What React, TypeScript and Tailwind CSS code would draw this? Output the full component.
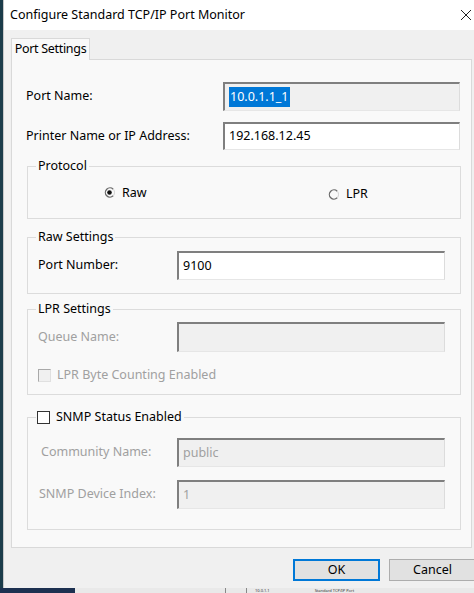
import React from 'react';

const FONT = { fontFamily: '"Noto Sans", "Open Sans", Arial, sans-serif' };

// ── Small win32-style controls ────────────────────────────────────────────
function TextBox({ value, disabled, selected, className }: { value?: string; disabled?: boolean; selected?: boolean; className: string }) {
  return (
    <div
      className={`flex items-center border-t-2 border-l-2 border-r border-b border-t-[#7f7f7f] border-l-[#7f7f7f] border-r-[#dcdcdc] border-b-[#e6e6e6] pl-[4px] ${
        disabled || selected ? 'bg-[#f0f0f0]' : 'bg-white'
      } ${className}`}
    >
      {selected ? (
        <span className="bg-[#0078d7] text-white px-[1px] leading-[20px]">{value}</span>
      ) : (
        <span className={disabled ? 'text-[#a0a0a0]' : 'text-black'}>{value}</span>
      )}
    </div>
  );
}

function Radio({ checked }: { checked?: boolean }) {
  return (
    <svg width="11" height="11" viewBox="0 0 11 11" className="shrink-0">
      <path d="M9.2 2.2 A4.6 4.6 0 1 0 9.2 8.8" fill="none" stroke="#6a6a6a" strokeWidth="1.3" />
      <path d="M9.2 2.2 A4.6 4.6 0 0 1 9.2 8.8" fill="none" stroke="#d8d8d8" strokeWidth="1.1" />
      {checked && <circle cx="5.5" cy="5.5" r="2.3" fill="#111" />}
    </svg>
  );
}

function CheckBox({ disabled }: { disabled?: boolean }) {
  return (
    <span
      className={`inline-block w-[13px] h-[13px] shrink-0 border ${
        disabled ? 'border-[#a9a9a9] border-r-[#e0e0e0] border-b-[#e0e0e0] bg-[#f0f0f0]' : 'border-[#333] bg-white'
      }`}
    />
  );
}

function Legend({ children }: { children: React.ReactNode }) {
  return <legend className="ml-[8px] px-[2px] h-[18px] leading-[18px] flex items-center">{children}</legend>;
}

const GROUP = 'border border-[#dcdcdc] mx-[15px] w-[434px]';

export default function App() {
  return (
    <div className="w-[474px] h-[593px] overflow-hidden bg-[#16333f] flex flex-col text-[12.5px] text-black" style={FONT}>
      <div className="flex h-[588px] shrink-0">
        <div className="w-[3px] shrink-0 bg-[#1b3c4a]" />

        {/* ── Dialog window ─────────────────────────────────────────── */}
        <div className="w-[471px] overflow-hidden bg-[#f0f0f0] flex flex-col border-l border-[#c8c8c8]">
          <div className="h-[30px] shrink-0 bg-white flex items-center justify-between pl-[6px] pr-[2px]">
            <span className="text-[12.5px] text-black">Configure Standard TCP/IP Port Monitor</span>
            <svg width="12" height="12" viewBox="0 0 12 12">
              <path d="M1 1 L11 11 M11 1 L1 11" stroke="#222" strokeWidth="1" />
            </svg>
          </div>

          <div className="pt-[8px] pl-[7px]">
            {/* tab header */}
            <div className="flex">
              <div className="w-[79px] h-[22px] bg-[#f9f9f9] border border-b-0 border-[#d9d9d9] flex items-center justify-center -mb-px relative z-10 tracking-[-0.3px]">
                Port Settings
              </div>
            </div>

            {/* tab panel */}
            <div className="w-[461px] h-[489px] bg-[#f9f9f9] border border-[#d9d9d9] pt-[22px] flex flex-col">
              <div className="flex items-center pl-[14px]">
                <span className="w-[197px]">Port Name:</span>
                <TextBox value="10.0.1.1_1" selected className="w-[237px] h-[29px]" />
              </div>
              <div className="flex items-center pl-[14px] mt-[11px]">
                <span className="w-[197px]">Printer Name or IP Address:</span>
                <TextBox value="192.168.12.45" className="w-[237px] h-[28px]" />
              </div>

              <fieldset className={`${GROUP} h-[62px] mt-[7px]`}>
                <Legend>Protocol</Legend>
                <div className="flex items-center pl-[76px] pt-[7px]">
                  <div className="w-[224px] flex items-center gap-[7px]">
                    <Radio checked />
                    <span>Raw</span>
                  </div>
                  <div className="flex items-center gap-[7px] mt-[3px]">
                    <Radio />
                    <span>LPR</span>
                  </div>
                </div>
              </fieldset>

              <fieldset className={`${GROUP} h-[66px] mt-[9px]`}>
                <Legend>Raw Settings</Legend>
                <div className="flex items-center pl-[10px] pt-[5px]">
                  <span className="w-[139px]">Port Number:</span>
                  <TextBox value="9100" className="w-[268px] h-[29px]" />
                </div>
              </fieldset>

              <fieldset className={`${GROUP} h-[95px] mt-[6px]`}>
                <Legend>LPR Settings</Legend>
                <div className="flex items-center pl-[10px] pt-[4px]">
                  <span className="w-[139px] text-[#a0a0a0]">Queue Name:</span>
                  <TextBox disabled className="w-[268px] h-[30px]" />
                </div>
                <div className="flex items-center gap-[6px] pl-[10px] mt-[14px] h-[18px] text-[#a0a0a0]">
                  <CheckBox disabled />
                  <span>LPR Byte Counting Enabled</span>
                </div>
              </fieldset>

              <fieldset className={`${GROUP} h-[122px] mt-[13px]`}>
                <Legend>
                  <span className="flex items-center gap-[6px] -ml-[1px]">
                    <CheckBox />
                    <span>SNMP Status Enabled</span>
                  </span>
                </Legend>
                <div className="flex items-center pl-[13px] pt-[12px]">
                  <span className="w-[136px] text-[#a0a0a0]">Community Name:</span>
                  <TextBox value="public" disabled className="w-[268px] h-[29px]" />
                </div>
                <div className="flex items-center pl-[11px] mt-[13px]">
                  <span className="w-[138px] text-[#a0a0a0]">SNMP Device Index:</span>
                  <TextBox value="1" disabled className="w-[268px] h-[29px]" />
                </div>
              </fieldset>
            </div>
          </div>

          {/* buttons */}
          <div className="flex pl-[289px] gap-[9px] mt-[11px]">
            <button className="w-[87px] h-[22px] shrink-0 bg-[#e1e1e1] border border-[#0078d7] outline outline-1 outline-[#0078d7] -outline-offset-2">
              OK
            </button>
            <button className="w-[87px] h-[22px] shrink-0 bg-[#e1e1e1] border border-[#adadad]">Cancel</button>
          </div>
        </div>
      </div>

      {/* window behind, just peeking out */}
      <div className="h-[5px] flex overflow-hidden">
        <div className="w-[75px] bg-[#1c3050]" />
        <div className="flex-1 bg-[#e9e9e9] flex items-end text-[4px] leading-[5px] text-[#333] overflow-hidden">
          <span className="ml-[150px] border-l border-[#888] h-[5px]" />
          <span className="ml-[20px] border-l border-[#888] h-[5px]" />
          <span className="ml-[8px]">10.0.1.1</span>
          <span className="ml-[45px]">Standard TCP/IP Port</span>
        </div>
      </div>
    </div>
  );
}
